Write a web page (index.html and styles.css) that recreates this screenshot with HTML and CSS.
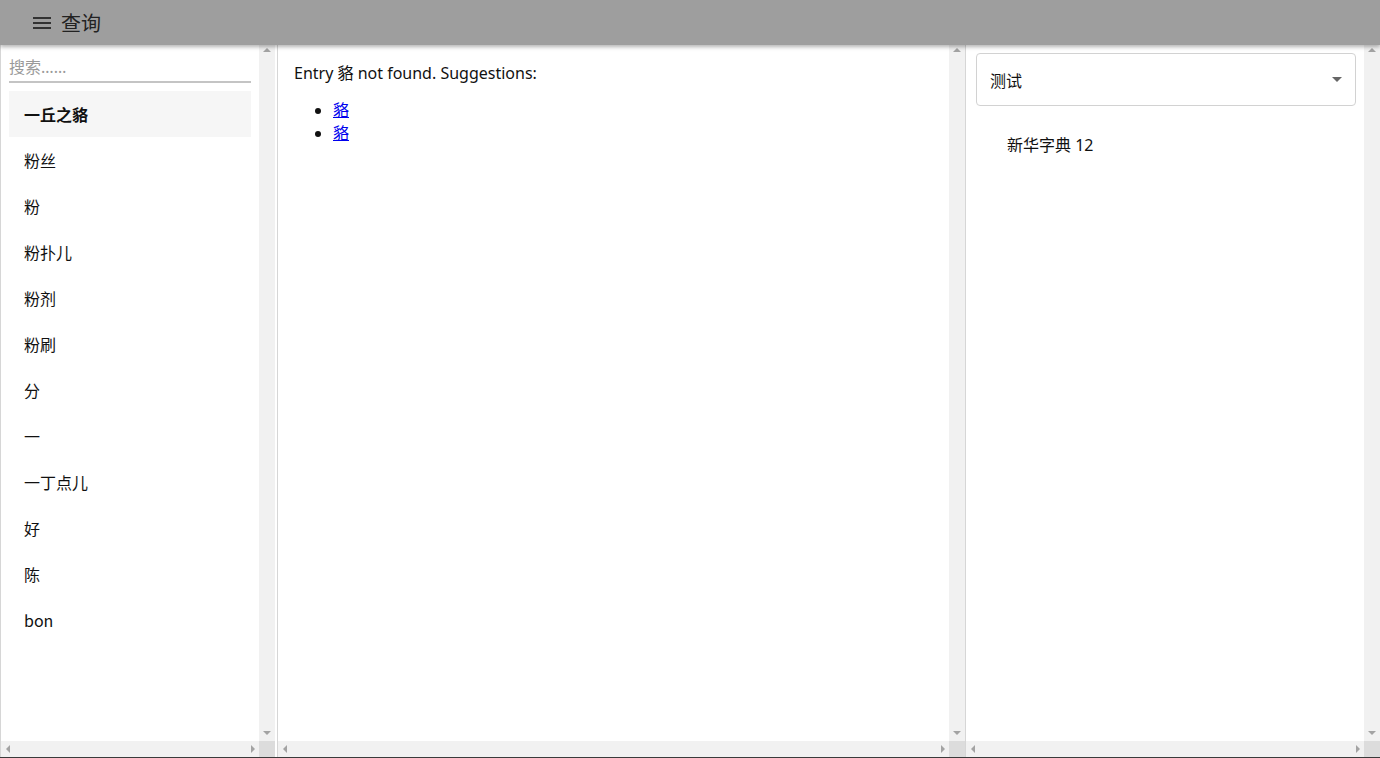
FILE: index.html
```html
<!DOCTYPE html>
<html lang="zh-CN">
<head>
    <meta charset="UTF-8">
    <meta name="viewport" content="width=device-width, initial-scale=1.0">
    <title>查询</title>
    <link rel="stylesheet" href="styles.css">
</head>
<body>
    <header class="topbar">
        <svg class="menu-icon" viewBox="0 0 24 24" width="24" height="24">
            <path d="M3 18h18v-2H3v2zm0-5h18v-2H3v2zm0-7v2h18V6H3z" fill="#333"/>
        </svg>
        <span class="title">查询</span>
    </header>

    <main class="panes">
        <!-- lista de palavras -->
        <section class="pane pane-list">
            <div class="pane-body">
                <input class="search" type="text" placeholder="搜索……">
                <ul class="words">
                    <li class="active">一丘之貉</li>
                    <li>粉丝</li>
                    <li>粉</li>
                    <li>粉扑儿</li>
                    <li>粉剂</li>
                    <li>粉刷</li>
                    <li>分</li>
                    <li>一</li>
                    <li>一丁点儿</li>
                    <li>好</li>
                    <li>陈</li>
                    <li>bon</li>
                </ul>
            </div>
            <div class="vbar"><span class="arrow up"></span><span class="arrow down"></span></div>
            <div class="hbar"><span class="arrow left"></span><span class="arrow right"></span></div>
            <div class="corner"></div>
        </section>

        <!-- resultado -->
        <section class="pane pane-entry">
            <div class="pane-body">
                <p class="notice">Entry 貉 not found. Suggestions:</p>
                <ul class="suggestions">
                    <li><a href="#">貉</a></li>
                    <li><a href="#">貉</a></li>
                </ul>
            </div>
            <div class="vbar"><span class="arrow up"></span><span class="arrow down"></span></div>
            <div class="hbar"><span class="arrow left"></span><span class="arrow right"></span></div>
            <div class="corner"></div>
        </section>

        <!-- dicionários -->
        <section class="pane pane-dicts">
            <div class="pane-body">
                <div class="select">
                    <span>测试</span>
                    <span class="caret"></span>
                </div>
                <div class="dict">新华字典 12</div>
            </div>
            <div class="vbar"><span class="arrow up"></span><span class="arrow down"></span></div>
            <div class="hbar"><span class="arrow left"></span><span class="arrow right"></span></div>
            <div class="corner"></div>
        </section>
    </main>
</body>
</html>
```

FILE: styles.css
```css
* {
    margin: 0;
    padding: 0;
    box-sizing: border-box;
}

html, body {
    height: 100%;
}

body {
    font-family: 'Noto Sans', 'Noto Sans CJK SC', sans-serif;
    font-size: 16px;
    color: #111;
    background: #fff;
    display: flex;
    flex-direction: column;
    overflow: hidden;
}

.topbar {
    height: 45px;
    flex: none;
    background: #9e9e9e;
    display: flex;
    align-items: center;
    padding-left: 30px;
    box-shadow: 0 2px 4px rgba(0, 0, 0, 0.3);
    position: relative;
    z-index: 2;
}

.menu-icon {
    display: block;
    margin-top: 1px;
}

.title {
    margin-left: 7px;
    font-family: 'Noto Sans CJK SC', sans-serif;
    font-size: 20px;
    color: #222;
    line-height: 24px;
}

.panes {
    flex: 1;
    min-height: 0;
    display: flex;
    border-bottom: 1px solid #3a3a3a;
}

.pane {
    height: 100%;
    display: grid;
    grid-template-columns: minmax(0, 1fr) 16px;
    grid-template-rows: minmax(0, 1fr) 16px;
    border-left: 1px solid #d6d6d6;
}

.pane-body {
    overflow: hidden;
}

/* barras de rolagem */
.vbar {
    background: #f1f1f1;
    display: flex;
    flex-direction: column;
    justify-content: space-between;
}

.hbar {
    background: #f1f1f1;
    display: flex;
    justify-content: space-between;
}

.corner {
    background: #dcdcdc;
}

.arrow {
    width: 16px;
    height: 16px;
    display: flex;
    align-items: center;
    justify-content: center;
}

.arrow::before {
    content: "";
    width: 0;
    height: 0;
    border: 4px solid transparent;
}

.arrow.up::before {
    border-top-width: 0;
    border-bottom-color: #a3a3a3;
    margin-bottom: 7px;
}

.arrow.down::before {
    border-bottom-width: 0;
    border-top-color: #a3a3a3;
    margin-bottom: 1px;
}

.arrow.left::before {
    border-left-width: 0;
    border-right-color: #a3a3a3;
    margin-right: 3px;
}

.arrow.right::before {
    border-right-width: 0;
    border-left-color: #a3a3a3;
    margin-left: 3px;
}

.pane-list {
    width: 275px;
    flex: none;
    margin-right: 2px;
}

.pane-list .pane-body {
    padding: 8px;
}

.search {
    display: block;
    width: 100%;
    height: 30px;
    border: none;
    border-bottom: 2px solid #c4c4c4;
    outline: none;
    font-family: 'Noto Sans', 'Noto Sans CJK SC', sans-serif;
    font-size: 16px;
    color: #333;
    background: transparent;
}

.search::placeholder {
    color: #9a9a9a;
}

.words {
    list-style: none;
    margin-top: 8px;
}

.words li {
    height: 46px;
    line-height: 46px;
    padding-left: 15px;
    font-family: 'Noto Sans CJK SC', sans-serif;
    white-space: nowrap;
}

.words li.active {
    background: #f6f6f6;
    font-weight: bold;
}

.pane-entry {
    flex: 1;
    min-width: 0;
}

.pane-entry .pane-body {
    padding: 16px;
}

.notice {
    line-height: 24px;
}

.suggestions {
    margin-top: 14px;
    padding-left: 39px;
}

.suggestions li {
    line-height: 23px;
}

.suggestions a {
    color: #0000ee;
}

.pane-dicts {
    width: 415px;
    flex: none;
}

.pane-dicts .pane-body {
    padding: 8px 8px 8px 10px;
}

.select {
    height: 53px;
    border: 1px solid #d2d2d2;
    border-radius: 4px;
    display: flex;
    align-items: center;
    justify-content: space-between;
    padding: 0 13px;
    font-family: 'Noto Sans CJK SC', sans-serif;
}

.caret {
    width: 0;
    height: 0;
    border-left: 5px solid transparent;
    border-right: 5px solid transparent;
    border-top: 5px solid #666;
}

.dict {
    margin-top: 27px;
    padding-left: 31px;
    line-height: 24px;
    font-family: 'Noto Sans', 'Noto Sans CJK SC', sans-serif;
}
```
